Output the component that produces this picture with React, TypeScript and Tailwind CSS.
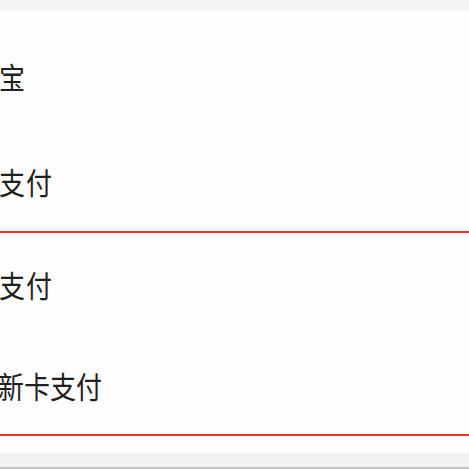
import React from "react";

const font = { fontFamily: '"Noto Sans CJK SC", "Noto Sans", sans-serif' };

function Row({
  label,
  className,
  textClass,
}: {
  label: string;
  className: string;
  textClass: string;
}) {
  return (
    <div className={`flex items-center overflow-hidden ${className}`}>
      <span
        className={`scale-y-[1.14] origin-center whitespace-nowrap text-[26px] leading-none text-[#202020] ${textClass}`}
      >
        {label}
      </span>
    </div>
  );
}

export default function App() {
  return (
    <div
      className="flex h-[469px] w-[469px] flex-col overflow-hidden bg-[#fdfdfd]"
      style={font}
    >
      <div className="h-[10px] shrink-0 bg-[#f3f3f3]" />
      <Row label="支付宝" className="h-[118px] shrink-0 pt-[14px]" textClass="ml-[-53px]" />
      <Row label="微信支付" className="h-[103px] shrink-0 pt-[2px]" textClass="ml-[-55px] tracking-[1px]" />
      <div className="mx-[-2px] shrink-0 border-2 border-[#e8342c]">
        <Row label="银联支付" className="h-[101px]" textClass="ml-[-55px] tracking-[1px]" />
        <Row label="使用新卡支付" className="h-[100px] pt-[2px]" textClass="ml-[-54px]" />
      </div>
      <div className="h-[17px] shrink-0" />
      <div className="h-[14px] shrink-0 bg-[#f2f2f2]" />
      <div className="h-[2px] shrink-0 bg-[#c4c4c4]" />
    </div>
  );
}
